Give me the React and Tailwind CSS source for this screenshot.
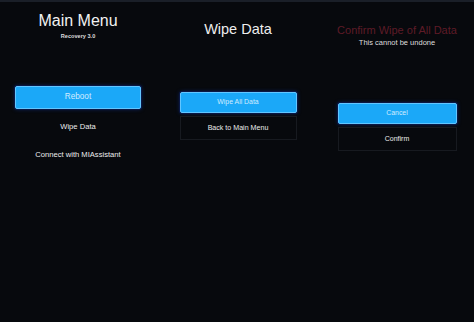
import React from "react";

const font = { fontFamily: "'Liberation Sans', Arial, sans-serif" };

function BlueButton({ label, className }) {
  return (
    <div
      className={`flex items-center justify-center rounded-[2px] border border-[#62c6ff] bg-[#1ba8f8] text-[#d2ecff] shadow-[0_0_0_1px_#0a1744,0_0_4px_#0d2a70] ${className}`}
    >
      {label}
    </div>
  );
}

function PlainBox({ label, className }) {
  return (
    <div className={`flex items-center justify-center border border-[#171a20] text-[#ececec] ${className}`}>
      {label}
    </div>
  );
}

export default function App() {
  return (
    <div className="w-[474px] h-[322px] bg-[#07090d] overflow-hidden" style={font}>
      <div className="h-[2px] bg-[#1a1f28]" />
      <div className="grid grid-cols-[156px_164px_154px]">
        {/* main menu */}
        <div className="flex flex-col items-center pt-[9px]">
          <div className="text-[16px] leading-[20px] text-[#f2f2f2]">Main Menu</div>
          <div className="mt-[1px] text-[5.6px] leading-[8px] font-semibold text-[#dcdcdc]">Recovery 3.0</div>
          <BlueButton label="Reboot" className="mt-[46px] w-[126px] h-[23px] text-[8.2px]" />
          <div className="mt-[12px] text-[7.6px] leading-[12px] text-[#ededed]">Wipe Data</div>
          <div className="mt-[16px] text-[7.6px] leading-[12px] text-[#ededed]">Connect with MIAssistant</div>
        </div>

        {/* wipe data */}
        <div className="flex flex-col items-center pt-[17.5px]">
          <div className="text-[14.5px] leading-[18px] text-[#eeeeee]">Wipe Data</div>
          <BlueButton label="Wipe All Data" className="mt-[54.5px] w-[117px] h-[21px] text-[6.9px]" />
          <PlainBox label="Back to Main Menu" className="mt-[3px] w-[117px] h-[24px] text-[7.1px]" />
        </div>

        {/* confirm */}
        <div className="flex flex-col items-center pt-[21px]">
          <div className="text-[11px] leading-[14px] text-[#5e1b27]">Confirm Wipe of All Data</div>
          <div className="mt-[1px] text-[7.5px] leading-[10px] text-[#dedede]">This cannot be undone</div>
          <BlueButton label="Cancel" className="mt-[55px] w-[119px] h-[21px] text-[6.9px]" />
          <PlainBox label="Confirm" className="mt-[3px] w-[119px] h-[24px] text-[7px]" />
        </div>
      </div>
    </div>
  );
}
